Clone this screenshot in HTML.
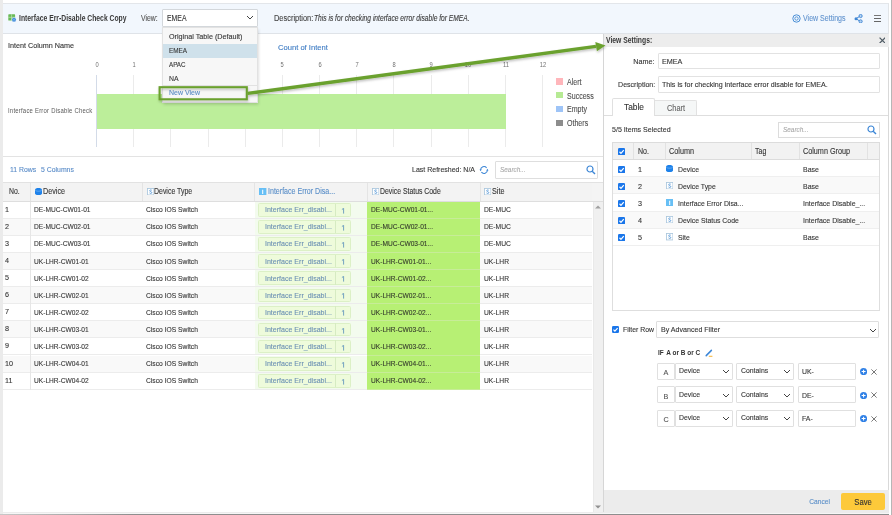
<!DOCTYPE html>
<html><head><meta charset="utf-8"><title>View Settings</title>
<style>
html,body{margin:0;padding:0;}
body{width:892px;height:515px;position:relative;overflow:hidden;background:#fff;font-family:"Liberation Sans", sans-serif;}
.r{position:absolute;}
.t{position:absolute;white-space:nowrap;-webkit-text-stroke:0.12px currentColor;}
</style></head><body>
<div class="r" style="left:0.00px;top:0.00px;width:3.00px;height:515.00px;background:#ebebeb"></div>
<div class="r" style="left:3.00px;top:3.00px;width:886.00px;height:30.50px;background:#f2f7fd;border-top:1px solid #e3e6ea;border-bottom:1px solid #dfe3e8;border-right:1px solid #e2e5e8;box-sizing:border-box"></div>
<svg class="r" style="left:7.8px;top:14px" width="10" height="9" viewBox="0 0 10 9"><rect x="0.3" y="0.3" width="6.8" height="6.2" rx="0.6" fill="#68b954"/><path d="M0.3 3.3H7.1M3.6 0.3V6.5" stroke="#cfeac6" stroke-width="0.6"/><circle cx="6.0" cy="5.7" r="2.2" fill="#2f83da" stroke="#f2f7fd" stroke-width="0.5"/><path d="M6.0 4.9v1.7" stroke="#fff" stroke-width="0.6"/></svg>
<div class="t" style="left:18.90px;top:13.25px;font-size:8.6px;line-height:10.75px;color:#3a3a3a;font-weight:bold;font-style:normal;transform:scaleX(0.79);transform-origin:0 0;-webkit-text-stroke:0;">Interface Err-Disable Check Copy</div>
<div class="t" style="left:141.00px;top:13.35px;font-size:8.6px;line-height:10.75px;color:#555;font-weight:normal;font-style:normal;transform:scaleX(0.8);transform-origin:0 0;">View:</div>
<div class="r" style="left:161.80px;top:9.30px;width:95.80px;height:17.80px;background:#fff;border:1px solid #d3d7db;border-radius:1px;box-sizing:border-box"></div>
<div class="t" style="left:166.80px;top:13.15px;font-size:8.6px;line-height:10.75px;color:#363636;font-weight:normal;font-style:normal;transform:scaleX(0.8);transform-origin:0 0;">EMEA</div>
<svg class="r" style="left:246px;top:15px" width="8" height="5" viewBox="0 0 8 5"><path d="M1 1l3 3 3-3" fill="none" stroke="#444" stroke-width="1"/></svg>
<div class="t" style="left:273.90px;top:13.44px;font-size:8.5px;line-height:10.625px;color:#444;font-weight:normal;font-style:normal;transform:scaleX(0.875);transform-origin:0 0;">Description:</div>
<div class="t" style="left:313.90px;top:13.44px;font-size:8.5px;line-height:10.625px;color:#3a3a3a;font-weight:normal;font-style:italic;transform:scaleX(0.784);transform-origin:0 0;">This is for checking interface error disable for EMEA.</div>
<svg class="r" style="left:791.5px;top:14.3px" width="9" height="9" viewBox="0 0 9 9"><circle cx="4.5" cy="4.5" r="3.7" fill="none" stroke="#4a8fd6" stroke-width="1"/><circle cx="4.5" cy="4.5" r="1.7" fill="none" stroke="#4a8fd6" stroke-width="0.9"/></svg>
<div class="t" style="left:803.30px;top:13.44px;font-size:8.4px;line-height:10.5px;color:#6495cf;font-weight:normal;font-style:normal;transform:scaleX(0.84);transform-origin:0 0;">View Settings</div>
<svg class="r" style="left:854px;top:13.8px" width="9" height="9.5" viewBox="0 0 9 9.5"><path d="M2 4.7L6.3 2M2 4.7L6.3 7.4" stroke="#3f86d4" stroke-width="1"/><circle cx="2" cy="4.7" r="1.5" fill="#3f86d4"/><circle cx="6.6" cy="2" r="1.6" fill="#b5d3f2" stroke="#3f86d4" stroke-width="0.9"/><circle cx="6.6" cy="7.4" r="1.6" fill="#b5d3f2" stroke="#3f86d4" stroke-width="0.9"/></svg>
<div class="r" style="left:874.00px;top:14.90px;width:7.20px;height:1.00px;background:#777"></div>
<div class="r" style="left:874.00px;top:17.70px;width:7.20px;height:1.00px;background:#666"></div>
<div class="r" style="left:874.00px;top:20.50px;width:7.20px;height:1.00px;background:#666"></div>
<div class="t" style="left:7.80px;top:41.03px;font-size:8px;line-height:10.0px;color:#363636;font-weight:normal;font-style:normal;transform:scaleX(0.9);transform-origin:0 0;">Intent Column Name</div>
<div class="t" style="left:277.60px;top:42.73px;font-size:8px;line-height:10.0px;color:#3f7cc4;font-weight:normal;font-style:normal;transform:scaleX(0.95);transform-origin:0 0;">Count of Intent</div>
<div class="r" style="left:96.00px;top:74.80px;width:1.00px;height:72.40px;background:#d3dbe8"></div>
<div class="t" style="left:46.50px;width:100px;text-align:center;top:61.00px;font-size:7px;line-height:8.75px;color:#707070;font-weight:normal;font-style:normal;transform:scaleX(0.82);transform-origin:50% 0;-webkit-text-stroke:0;">0</div>
<div class="r" style="left:133.18px;top:74.80px;width:1.00px;height:72.40px;background:#ebebeb"></div>
<div class="t" style="left:83.68px;width:100px;text-align:center;top:61.00px;font-size:7px;line-height:8.75px;color:#707070;font-weight:normal;font-style:normal;transform:scaleX(0.82);transform-origin:50% 0;-webkit-text-stroke:0;">1</div>
<div class="r" style="left:170.36px;top:74.80px;width:1.00px;height:72.40px;background:#ebebeb"></div>
<div class="t" style="left:120.86px;width:100px;text-align:center;top:61.00px;font-size:7px;line-height:8.75px;color:#707070;font-weight:normal;font-style:normal;transform:scaleX(0.82);transform-origin:50% 0;-webkit-text-stroke:0;">2</div>
<div class="r" style="left:207.55px;top:74.80px;width:1.00px;height:72.40px;background:#ebebeb"></div>
<div class="t" style="left:158.05px;width:100px;text-align:center;top:61.00px;font-size:7px;line-height:8.75px;color:#707070;font-weight:normal;font-style:normal;transform:scaleX(0.82);transform-origin:50% 0;-webkit-text-stroke:0;">3</div>
<div class="r" style="left:244.73px;top:74.80px;width:1.00px;height:72.40px;background:#ebebeb"></div>
<div class="t" style="left:195.23px;width:100px;text-align:center;top:61.00px;font-size:7px;line-height:8.75px;color:#707070;font-weight:normal;font-style:normal;transform:scaleX(0.82);transform-origin:50% 0;-webkit-text-stroke:0;">4</div>
<div class="r" style="left:281.91px;top:74.80px;width:1.00px;height:72.40px;background:#ebebeb"></div>
<div class="t" style="left:232.41px;width:100px;text-align:center;top:61.00px;font-size:7px;line-height:8.75px;color:#707070;font-weight:normal;font-style:normal;transform:scaleX(0.82);transform-origin:50% 0;-webkit-text-stroke:0;">5</div>
<div class="r" style="left:319.09px;top:74.80px;width:1.00px;height:72.40px;background:#ebebeb"></div>
<div class="t" style="left:269.59px;width:100px;text-align:center;top:61.00px;font-size:7px;line-height:8.75px;color:#707070;font-weight:normal;font-style:normal;transform:scaleX(0.82);transform-origin:50% 0;-webkit-text-stroke:0;">6</div>
<div class="r" style="left:356.27px;top:74.80px;width:1.00px;height:72.40px;background:#ebebeb"></div>
<div class="t" style="left:306.77px;width:100px;text-align:center;top:61.00px;font-size:7px;line-height:8.75px;color:#707070;font-weight:normal;font-style:normal;transform:scaleX(0.82);transform-origin:50% 0;-webkit-text-stroke:0;">7</div>
<div class="r" style="left:393.45px;top:74.80px;width:1.00px;height:72.40px;background:#ebebeb"></div>
<div class="t" style="left:343.95px;width:100px;text-align:center;top:61.00px;font-size:7px;line-height:8.75px;color:#707070;font-weight:normal;font-style:normal;transform:scaleX(0.82);transform-origin:50% 0;-webkit-text-stroke:0;">8</div>
<div class="r" style="left:430.64px;top:74.80px;width:1.00px;height:72.40px;background:#ebebeb"></div>
<div class="t" style="left:381.14px;width:100px;text-align:center;top:61.00px;font-size:7px;line-height:8.75px;color:#707070;font-weight:normal;font-style:normal;transform:scaleX(0.82);transform-origin:50% 0;-webkit-text-stroke:0;">9</div>
<div class="r" style="left:467.82px;top:74.80px;width:1.00px;height:72.40px;background:#ebebeb"></div>
<div class="t" style="left:418.32px;width:100px;text-align:center;top:61.00px;font-size:7px;line-height:8.75px;color:#707070;font-weight:normal;font-style:normal;transform:scaleX(0.82);transform-origin:50% 0;-webkit-text-stroke:0;">10</div>
<div class="r" style="left:505.00px;top:74.80px;width:1.00px;height:72.40px;background:#ebebeb"></div>
<div class="t" style="left:455.50px;width:100px;text-align:center;top:61.00px;font-size:7px;line-height:8.75px;color:#707070;font-weight:normal;font-style:normal;transform:scaleX(0.82);transform-origin:50% 0;-webkit-text-stroke:0;">11</div>
<div class="r" style="left:542.18px;top:74.80px;width:1.00px;height:72.40px;background:#ebebeb"></div>
<div class="t" style="left:492.68px;width:100px;text-align:center;top:61.00px;font-size:7px;line-height:8.75px;color:#707070;font-weight:normal;font-style:normal;transform:scaleX(0.82);transform-origin:50% 0;-webkit-text-stroke:0;">12</div>
<div class="r" style="left:96.50px;top:94.20px;width:409.00px;height:34.40px;background:#bcee9a"></div>
<div class="t" style="left:7.60px;top:107.09px;font-size:6.6px;line-height:8.25px;color:#5a5a5a;font-weight:normal;font-style:normal;transform:scaleX(0.9);transform-origin:0 0;letter-spacing:0.25px;-webkit-text-stroke:0;">Interface Error Disable Check</div>
<div class="r" style="left:556.00px;top:77.80px;width:7.00px;height:6.80px;background:#ffb6bb"></div>
<div class="t" style="left:566.90px;top:76.64px;font-size:8.3px;line-height:10.375px;color:#505050;font-weight:normal;font-style:normal;transform:scaleX(0.85);transform-origin:0 0;">Alert</div>
<div class="r" style="left:556.00px;top:91.70px;width:7.00px;height:6.80px;background:#b6ea94"></div>
<div class="t" style="left:566.90px;top:90.54px;font-size:8.3px;line-height:10.375px;color:#505050;font-weight:normal;font-style:normal;transform:scaleX(0.85);transform-origin:0 0;">Success</div>
<div class="r" style="left:556.00px;top:105.60px;width:7.00px;height:6.80px;background:#9ec4f7"></div>
<div class="t" style="left:566.90px;top:104.44px;font-size:8.3px;line-height:10.375px;color:#505050;font-weight:normal;font-style:normal;transform:scaleX(0.85);transform-origin:0 0;">Empty</div>
<div class="r" style="left:556.00px;top:119.50px;width:7.00px;height:6.80px;background:#8d8d8d"></div>
<div class="t" style="left:566.90px;top:118.34px;font-size:8.3px;line-height:10.375px;color:#505050;font-weight:normal;font-style:normal;transform:scaleX(0.85);transform-origin:0 0;">Others</div>
<div class="r" style="left:3.00px;top:156.00px;width:600.50px;height:1.00px;background:#e3e3e3"></div>
<div class="t" style="left:9.70px;top:164.93px;font-size:8px;line-height:10.0px;color:#5a8cc8;font-weight:normal;font-style:normal;transform:scaleX(0.86);transform-origin:0 0;">11 Rows</div>
<div class="t" style="left:40.60px;top:164.93px;font-size:8px;line-height:10.0px;color:#5a8cc8;font-weight:normal;font-style:normal;transform:scaleX(0.86);transform-origin:0 0;">5 Columns</div>
<div class="t" style="right:417.10px;top:165.23px;font-size:8px;line-height:10.0px;color:#363636;font-weight:normal;font-style:normal;transform:scaleX(0.875);transform-origin:100% 0;">Last Refreshed: N/A</div>
<svg class="r" style="left:479px;top:165.2px" width="10" height="10" viewBox="0 0 10 10"><path d="M7.6 2.8A3.4 3.4 0 0 0 1.6 5M2.4 7.2A3.4 3.4 0 0 0 8.4 5" fill="none" stroke="#3c86d6" stroke-width="1.1"/><path d="M0.5 4.4H2.7L1.6 6.2z M7.3 5.6H9.5L8.4 3.8z" fill="#3c86d6"/></svg>
<div class="r" style="left:495.30px;top:161.00px;width:103.10px;height:18.00px;background:#fff;border:1px solid #dedede;box-sizing:border-box;border-radius:1px"></div>
<div class="t" style="left:500.00px;top:164.53px;font-size:8px;line-height:10.0px;color:#aaa;font-weight:normal;font-style:italic;transform:scaleX(0.8);transform-origin:0 0;">Search...</div>
<svg class="r" style="left:585.5px;top:164.5px" width="10" height="10" viewBox="0 0 10 10"><circle cx="4" cy="4" r="3" fill="none" stroke="#3c86d6" stroke-width="1.2"/><path d="M6.2 6.2L9 9" stroke="#3c86d6" stroke-width="1.4"/></svg>
<div class="r" style="left:3.00px;top:181.50px;width:589.00px;height:20.00px;background:#f3f3f3;border-top:1px solid #e2e2e2;border-bottom:1px solid #dedede;box-sizing:border-box"></div>
<div class="r" style="left:592.00px;top:181.50px;width:11.50px;height:20.00px;background:#f4f4f4;border-top:1px solid #e2e2e2;border-bottom:1px solid #dedede;box-sizing:border-box"></div>
<div class="r" style="left:30.00px;top:182.50px;width:1.00px;height:18.00px;background:#e4e4e4"></div>
<div class="r" style="left:141.70px;top:182.50px;width:1.00px;height:18.00px;background:#e4e4e4"></div>
<div class="r" style="left:254.10px;top:182.50px;width:1.00px;height:18.00px;background:#e4e4e4"></div>
<div class="r" style="left:367.00px;top:182.50px;width:1.00px;height:18.00px;background:#e4e4e4"></div>
<div class="r" style="left:479.50px;top:182.50px;width:1.00px;height:18.00px;background:#e4e4e4"></div>
<div class="t" style="left:8.70px;top:186.45px;font-size:8.7px;line-height:10.875px;color:#363636;font-weight:normal;font-style:normal;transform:scaleX(0.791);transform-origin:0 0;">No.</div>
<svg class="r" style="left:34.9px;top:188.1px" width="7" height="7.2" viewBox="0 0 7 7.2"><path d="M0 1.6C0 0.7 1.6 0 3.5 0S7 0.7 7 1.6V5.6C7 6.5 5.4 7.2 3.5 7.2S0 6.5 0 5.6Z" fill="#1e82ea"/><path d="M0.3 2.2C0.8 2.9 2 3.2 3.5 3.2S6.2 2.9 6.7 2.2" fill="none" stroke="#8fc3f5" stroke-width="0.6"/></svg>
<div class="t" style="left:43.00px;top:186.45px;font-size:8.7px;line-height:10.875px;color:#363636;font-weight:normal;font-style:normal;transform:scaleX(0.828);transform-origin:0 0;">Device</div>
<svg class="r" style="left:146.5px;top:188px" width="7.4" height="7.4" viewBox="0 0 8 8"><rect x="0.5" y="0.5" width="7" height="7" fill="#fff" stroke="#a9c6dd" stroke-width="0.9"/><path d="M5.2 2.6Q4.8 2.1 4 2.1Q2.9 2.1 2.9 3Q2.9 3.7 4 3.95Q5.2 4.2 5.2 5Q5.2 5.9 4 5.9Q3.1 5.9 2.7 5.3" fill="none" stroke="#4a8fd2" stroke-width="0.85"/></svg>
<div class="t" style="left:154.20px;top:186.45px;font-size:8.7px;line-height:10.875px;color:#363636;font-weight:normal;font-style:normal;transform:scaleX(0.8);transform-origin:0 0;">Device Type</div>
<svg class="r" style="left:259.2px;top:188px" width="7.4" height="7.4" viewBox="0 0 8 8"><rect x="0" y="0" width="8" height="8" fill="#67bff5"/><path d="M4 1.8v4.6" stroke="#fff" stroke-width="1.1"/></svg>
<div class="t" style="left:267.50px;top:186.45px;font-size:8.7px;line-height:10.875px;color:#5b8fc8;font-weight:normal;font-style:normal;transform:scaleX(0.813);transform-origin:0 0;">Interface Error Disa...</div>
<svg class="r" style="left:372px;top:188px" width="7.4" height="7.4" viewBox="0 0 8 8"><rect x="0.5" y="0.5" width="7" height="7" fill="#fff" stroke="#a9c6dd" stroke-width="0.9"/><path d="M5.2 2.6Q4.8 2.1 4 2.1Q2.9 2.1 2.9 3Q2.9 3.7 4 3.95Q5.2 4.2 5.2 5Q5.2 5.9 4 5.9Q3.1 5.9 2.7 5.3" fill="none" stroke="#4a8fd2" stroke-width="0.85"/></svg>
<div class="t" style="left:380.30px;top:186.45px;font-size:8.7px;line-height:10.875px;color:#363636;font-weight:normal;font-style:normal;transform:scaleX(0.791);transform-origin:0 0;">Device Status Code</div>
<svg class="r" style="left:484px;top:188px" width="7.4" height="7.4" viewBox="0 0 8 8"><rect x="0.5" y="0.5" width="7" height="7" fill="#fff" stroke="#a9c6dd" stroke-width="0.9"/><path d="M5.2 2.6Q4.8 2.1 4 2.1Q2.9 2.1 2.9 3Q2.9 3.7 4 3.95Q5.2 4.2 5.2 5Q5.2 5.9 4 5.9Q3.1 5.9 2.7 5.3" fill="none" stroke="#4a8fd2" stroke-width="0.85"/></svg>
<div class="t" style="left:492.30px;top:186.45px;font-size:8.7px;line-height:10.875px;color:#363636;font-weight:normal;font-style:normal;transform:scaleX(0.828);transform-origin:0 0;">Site</div>
<div class="r" style="left:3.00px;top:201.60px;width:589.00px;height:17.10px;background:#ffffff;border-bottom:1px solid #ececec;box-sizing:border-box"></div>
<div class="r" style="left:254.60px;top:201.60px;width:112.70px;height:16.10px;background:#f3fbee"></div>
<div class="r" style="left:367.20px;top:201.60px;width:112.80px;height:17.10px;background:#b7f074"></div>
<div class="r" style="left:367.20px;top:217.80px;width:112.80px;height:1.00px;background:#c7ec98"></div>
<div class="t" style="left:5.40px;top:204.63px;font-size:8px;line-height:10.0px;color:#363636;font-weight:normal;font-style:normal;transform:scaleX(0.9);transform-origin:0 0;">1</div>
<div class="t" style="left:34.20px;top:205.23px;font-size:8px;line-height:10.0px;color:#363636;font-weight:normal;font-style:normal;transform:scaleX(0.826);transform-origin:0 0;">DE-MUC-CW01-01</div>
<div class="t" style="left:145.80px;top:205.23px;font-size:8px;line-height:10.0px;color:#363636;font-weight:normal;font-style:normal;transform:scaleX(0.84);transform-origin:0 0;">Cisco IOS Switch</div>
<div class="r" style="left:258.10px;top:203.00px;width:92.70px;height:13.70px;background:#eefbdb;border:1px solid #dcf0c6;border-radius:1.5px;box-sizing:border-box"></div>
<div class="r" style="left:335.00px;top:203.50px;width:0.90px;height:12.70px;background:#d6ebc2"></div>
<div class="t" style="left:264.70px;top:205.23px;font-size:8px;line-height:10.0px;color:#6d92b4;font-weight:normal;font-style:normal;transform:scaleX(0.88);transform-origin:0 0;">Interface Err_disabl...</div>
<svg class="r" style="left:341px;top:207.80px" width="4" height="6" viewBox="0 0 4 6"><path d="M2.6 0.3V5.6M0.9 1.5L2.6 0.3" fill="none" stroke="#6d9dbf" stroke-width="0.95"/></svg>
<div class="t" style="left:371.00px;top:205.23px;font-size:8px;line-height:10.0px;color:#343a2c;font-weight:normal;font-style:normal;transform:scaleX(0.826);transform-origin:0 0;">DE-MUC-CW01-01...</div>
<div class="t" style="left:484.00px;top:205.23px;font-size:8px;line-height:10.0px;color:#363636;font-weight:normal;font-style:normal;transform:scaleX(0.84);transform-origin:0 0;">DE-MUC</div>
<div class="r" style="left:3.00px;top:218.70px;width:589.00px;height:17.10px;background:#f9f9f9;border-bottom:1px solid #ececec;box-sizing:border-box"></div>
<div class="r" style="left:254.60px;top:218.70px;width:112.70px;height:16.10px;background:#f3fbee"></div>
<div class="r" style="left:367.20px;top:218.70px;width:112.80px;height:17.10px;background:#b7f074"></div>
<div class="r" style="left:367.20px;top:234.90px;width:112.80px;height:1.00px;background:#c7ec98"></div>
<div class="t" style="left:5.40px;top:221.73px;font-size:8px;line-height:10.0px;color:#363636;font-weight:normal;font-style:normal;transform:scaleX(0.9);transform-origin:0 0;">2</div>
<div class="t" style="left:34.20px;top:222.33px;font-size:8px;line-height:10.0px;color:#363636;font-weight:normal;font-style:normal;transform:scaleX(0.826);transform-origin:0 0;">DE-MUC-CW02-01</div>
<div class="t" style="left:145.80px;top:222.33px;font-size:8px;line-height:10.0px;color:#363636;font-weight:normal;font-style:normal;transform:scaleX(0.84);transform-origin:0 0;">Cisco IOS Switch</div>
<div class="r" style="left:258.10px;top:220.10px;width:92.70px;height:13.70px;background:#eefbdb;border:1px solid #dcf0c6;border-radius:1.5px;box-sizing:border-box"></div>
<div class="r" style="left:335.00px;top:220.60px;width:0.90px;height:12.70px;background:#d6ebc2"></div>
<div class="t" style="left:264.70px;top:222.33px;font-size:8px;line-height:10.0px;color:#6d92b4;font-weight:normal;font-style:normal;transform:scaleX(0.88);transform-origin:0 0;">Interface Err_disabl...</div>
<svg class="r" style="left:341px;top:224.90px" width="4" height="6" viewBox="0 0 4 6"><path d="M2.6 0.3V5.6M0.9 1.5L2.6 0.3" fill="none" stroke="#6d9dbf" stroke-width="0.95"/></svg>
<div class="t" style="left:371.00px;top:222.33px;font-size:8px;line-height:10.0px;color:#343a2c;font-weight:normal;font-style:normal;transform:scaleX(0.826);transform-origin:0 0;">DE-MUC-CW02-01...</div>
<div class="t" style="left:484.00px;top:222.33px;font-size:8px;line-height:10.0px;color:#363636;font-weight:normal;font-style:normal;transform:scaleX(0.84);transform-origin:0 0;">DE-MUC</div>
<div class="r" style="left:3.00px;top:235.80px;width:589.00px;height:17.10px;background:#ffffff;border-bottom:1px solid #ececec;box-sizing:border-box"></div>
<div class="r" style="left:254.60px;top:235.80px;width:112.70px;height:16.10px;background:#f3fbee"></div>
<div class="r" style="left:367.20px;top:235.80px;width:112.80px;height:17.10px;background:#b7f074"></div>
<div class="r" style="left:367.20px;top:252.00px;width:112.80px;height:1.00px;background:#c7ec98"></div>
<div class="t" style="left:5.40px;top:238.83px;font-size:8px;line-height:10.0px;color:#363636;font-weight:normal;font-style:normal;transform:scaleX(0.9);transform-origin:0 0;">3</div>
<div class="t" style="left:34.20px;top:239.43px;font-size:8px;line-height:10.0px;color:#363636;font-weight:normal;font-style:normal;transform:scaleX(0.826);transform-origin:0 0;">DE-MUC-CW03-01</div>
<div class="t" style="left:145.80px;top:239.43px;font-size:8px;line-height:10.0px;color:#363636;font-weight:normal;font-style:normal;transform:scaleX(0.84);transform-origin:0 0;">Cisco IOS Switch</div>
<div class="r" style="left:258.10px;top:237.20px;width:92.70px;height:13.70px;background:#eefbdb;border:1px solid #dcf0c6;border-radius:1.5px;box-sizing:border-box"></div>
<div class="r" style="left:335.00px;top:237.70px;width:0.90px;height:12.70px;background:#d6ebc2"></div>
<div class="t" style="left:264.70px;top:239.43px;font-size:8px;line-height:10.0px;color:#6d92b4;font-weight:normal;font-style:normal;transform:scaleX(0.88);transform-origin:0 0;">Interface Err_disabl...</div>
<svg class="r" style="left:341px;top:242.00px" width="4" height="6" viewBox="0 0 4 6"><path d="M2.6 0.3V5.6M0.9 1.5L2.6 0.3" fill="none" stroke="#6d9dbf" stroke-width="0.95"/></svg>
<div class="t" style="left:371.00px;top:239.43px;font-size:8px;line-height:10.0px;color:#343a2c;font-weight:normal;font-style:normal;transform:scaleX(0.826);transform-origin:0 0;">DE-MUC-CW03-01...</div>
<div class="t" style="left:484.00px;top:239.43px;font-size:8px;line-height:10.0px;color:#363636;font-weight:normal;font-style:normal;transform:scaleX(0.84);transform-origin:0 0;">DE-MUC</div>
<div class="r" style="left:3.00px;top:252.90px;width:589.00px;height:17.10px;background:#f9f9f9;border-bottom:1px solid #ececec;box-sizing:border-box"></div>
<div class="r" style="left:254.60px;top:252.90px;width:112.70px;height:16.10px;background:#f3fbee"></div>
<div class="r" style="left:367.20px;top:252.90px;width:112.80px;height:17.10px;background:#b7f074"></div>
<div class="r" style="left:367.20px;top:269.10px;width:112.80px;height:1.00px;background:#c7ec98"></div>
<div class="t" style="left:5.40px;top:255.93px;font-size:8px;line-height:10.0px;color:#363636;font-weight:normal;font-style:normal;transform:scaleX(0.9);transform-origin:0 0;">4</div>
<div class="t" style="left:34.20px;top:256.53px;font-size:8px;line-height:10.0px;color:#363636;font-weight:normal;font-style:normal;transform:scaleX(0.826);transform-origin:0 0;">UK-LHR-CW01-01</div>
<div class="t" style="left:145.80px;top:256.53px;font-size:8px;line-height:10.0px;color:#363636;font-weight:normal;font-style:normal;transform:scaleX(0.84);transform-origin:0 0;">Cisco IOS Switch</div>
<div class="r" style="left:258.10px;top:254.30px;width:92.70px;height:13.70px;background:#eefbdb;border:1px solid #dcf0c6;border-radius:1.5px;box-sizing:border-box"></div>
<div class="r" style="left:335.00px;top:254.80px;width:0.90px;height:12.70px;background:#d6ebc2"></div>
<div class="t" style="left:264.70px;top:256.53px;font-size:8px;line-height:10.0px;color:#6d92b4;font-weight:normal;font-style:normal;transform:scaleX(0.88);transform-origin:0 0;">Interface Err_disabl...</div>
<svg class="r" style="left:341px;top:259.10px" width="4" height="6" viewBox="0 0 4 6"><path d="M2.6 0.3V5.6M0.9 1.5L2.6 0.3" fill="none" stroke="#6d9dbf" stroke-width="0.95"/></svg>
<div class="t" style="left:371.00px;top:256.53px;font-size:8px;line-height:10.0px;color:#343a2c;font-weight:normal;font-style:normal;transform:scaleX(0.826);transform-origin:0 0;">UK-LHR-CW01-01...</div>
<div class="t" style="left:484.00px;top:256.53px;font-size:8px;line-height:10.0px;color:#363636;font-weight:normal;font-style:normal;transform:scaleX(0.84);transform-origin:0 0;">UK-LHR</div>
<div class="r" style="left:3.00px;top:270.00px;width:589.00px;height:17.10px;background:#ffffff;border-bottom:1px solid #ececec;box-sizing:border-box"></div>
<div class="r" style="left:254.60px;top:270.00px;width:112.70px;height:16.10px;background:#f3fbee"></div>
<div class="r" style="left:367.20px;top:270.00px;width:112.80px;height:17.10px;background:#b7f074"></div>
<div class="r" style="left:367.20px;top:286.20px;width:112.80px;height:1.00px;background:#c7ec98"></div>
<div class="t" style="left:5.40px;top:273.03px;font-size:8px;line-height:10.0px;color:#363636;font-weight:normal;font-style:normal;transform:scaleX(0.9);transform-origin:0 0;">5</div>
<div class="t" style="left:34.20px;top:273.63px;font-size:8px;line-height:10.0px;color:#363636;font-weight:normal;font-style:normal;transform:scaleX(0.826);transform-origin:0 0;">UK-LHR-CW01-02</div>
<div class="t" style="left:145.80px;top:273.63px;font-size:8px;line-height:10.0px;color:#363636;font-weight:normal;font-style:normal;transform:scaleX(0.84);transform-origin:0 0;">Cisco IOS Switch</div>
<div class="r" style="left:258.10px;top:271.40px;width:92.70px;height:13.70px;background:#eefbdb;border:1px solid #dcf0c6;border-radius:1.5px;box-sizing:border-box"></div>
<div class="r" style="left:335.00px;top:271.90px;width:0.90px;height:12.70px;background:#d6ebc2"></div>
<div class="t" style="left:264.70px;top:273.63px;font-size:8px;line-height:10.0px;color:#6d92b4;font-weight:normal;font-style:normal;transform:scaleX(0.88);transform-origin:0 0;">Interface Err_disabl...</div>
<svg class="r" style="left:341px;top:276.20px" width="4" height="6" viewBox="0 0 4 6"><path d="M2.6 0.3V5.6M0.9 1.5L2.6 0.3" fill="none" stroke="#6d9dbf" stroke-width="0.95"/></svg>
<div class="t" style="left:371.00px;top:273.63px;font-size:8px;line-height:10.0px;color:#343a2c;font-weight:normal;font-style:normal;transform:scaleX(0.826);transform-origin:0 0;">UK-LHR-CW01-02...</div>
<div class="t" style="left:484.00px;top:273.63px;font-size:8px;line-height:10.0px;color:#363636;font-weight:normal;font-style:normal;transform:scaleX(0.84);transform-origin:0 0;">UK-LHR</div>
<div class="r" style="left:3.00px;top:287.10px;width:589.00px;height:17.10px;background:#f9f9f9;border-bottom:1px solid #ececec;box-sizing:border-box"></div>
<div class="r" style="left:254.60px;top:287.10px;width:112.70px;height:16.10px;background:#f3fbee"></div>
<div class="r" style="left:367.20px;top:287.10px;width:112.80px;height:17.10px;background:#b7f074"></div>
<div class="r" style="left:367.20px;top:303.30px;width:112.80px;height:1.00px;background:#c7ec98"></div>
<div class="t" style="left:5.40px;top:290.13px;font-size:8px;line-height:10.0px;color:#363636;font-weight:normal;font-style:normal;transform:scaleX(0.9);transform-origin:0 0;">6</div>
<div class="t" style="left:34.20px;top:290.73px;font-size:8px;line-height:10.0px;color:#363636;font-weight:normal;font-style:normal;transform:scaleX(0.826);transform-origin:0 0;">UK-LHR-CW02-01</div>
<div class="t" style="left:145.80px;top:290.73px;font-size:8px;line-height:10.0px;color:#363636;font-weight:normal;font-style:normal;transform:scaleX(0.84);transform-origin:0 0;">Cisco IOS Switch</div>
<div class="r" style="left:258.10px;top:288.50px;width:92.70px;height:13.70px;background:#eefbdb;border:1px solid #dcf0c6;border-radius:1.5px;box-sizing:border-box"></div>
<div class="r" style="left:335.00px;top:289.00px;width:0.90px;height:12.70px;background:#d6ebc2"></div>
<div class="t" style="left:264.70px;top:290.73px;font-size:8px;line-height:10.0px;color:#6d92b4;font-weight:normal;font-style:normal;transform:scaleX(0.88);transform-origin:0 0;">Interface Err_disabl...</div>
<svg class="r" style="left:341px;top:293.30px" width="4" height="6" viewBox="0 0 4 6"><path d="M2.6 0.3V5.6M0.9 1.5L2.6 0.3" fill="none" stroke="#6d9dbf" stroke-width="0.95"/></svg>
<div class="t" style="left:371.00px;top:290.73px;font-size:8px;line-height:10.0px;color:#343a2c;font-weight:normal;font-style:normal;transform:scaleX(0.826);transform-origin:0 0;">UK-LHR-CW02-01...</div>
<div class="t" style="left:484.00px;top:290.73px;font-size:8px;line-height:10.0px;color:#363636;font-weight:normal;font-style:normal;transform:scaleX(0.84);transform-origin:0 0;">UK-LHR</div>
<div class="r" style="left:3.00px;top:304.20px;width:589.00px;height:17.10px;background:#ffffff;border-bottom:1px solid #ececec;box-sizing:border-box"></div>
<div class="r" style="left:254.60px;top:304.20px;width:112.70px;height:16.10px;background:#f3fbee"></div>
<div class="r" style="left:367.20px;top:304.20px;width:112.80px;height:17.10px;background:#b7f074"></div>
<div class="r" style="left:367.20px;top:320.40px;width:112.80px;height:1.00px;background:#c7ec98"></div>
<div class="t" style="left:5.40px;top:307.23px;font-size:8px;line-height:10.0px;color:#363636;font-weight:normal;font-style:normal;transform:scaleX(0.9);transform-origin:0 0;">7</div>
<div class="t" style="left:34.20px;top:307.83px;font-size:8px;line-height:10.0px;color:#363636;font-weight:normal;font-style:normal;transform:scaleX(0.826);transform-origin:0 0;">UK-LHR-CW02-02</div>
<div class="t" style="left:145.80px;top:307.83px;font-size:8px;line-height:10.0px;color:#363636;font-weight:normal;font-style:normal;transform:scaleX(0.84);transform-origin:0 0;">Cisco IOS Switch</div>
<div class="r" style="left:258.10px;top:305.60px;width:92.70px;height:13.70px;background:#eefbdb;border:1px solid #dcf0c6;border-radius:1.5px;box-sizing:border-box"></div>
<div class="r" style="left:335.00px;top:306.10px;width:0.90px;height:12.70px;background:#d6ebc2"></div>
<div class="t" style="left:264.70px;top:307.83px;font-size:8px;line-height:10.0px;color:#6d92b4;font-weight:normal;font-style:normal;transform:scaleX(0.88);transform-origin:0 0;">Interface Err_disabl...</div>
<svg class="r" style="left:341px;top:310.40px" width="4" height="6" viewBox="0 0 4 6"><path d="M2.6 0.3V5.6M0.9 1.5L2.6 0.3" fill="none" stroke="#6d9dbf" stroke-width="0.95"/></svg>
<div class="t" style="left:371.00px;top:307.83px;font-size:8px;line-height:10.0px;color:#343a2c;font-weight:normal;font-style:normal;transform:scaleX(0.826);transform-origin:0 0;">UK-LHR-CW02-02...</div>
<div class="t" style="left:484.00px;top:307.83px;font-size:8px;line-height:10.0px;color:#363636;font-weight:normal;font-style:normal;transform:scaleX(0.84);transform-origin:0 0;">UK-LHR</div>
<div class="r" style="left:3.00px;top:321.30px;width:589.00px;height:17.10px;background:#f9f9f9;border-bottom:1px solid #ececec;box-sizing:border-box"></div>
<div class="r" style="left:254.60px;top:321.30px;width:112.70px;height:16.10px;background:#f3fbee"></div>
<div class="r" style="left:367.20px;top:321.30px;width:112.80px;height:17.10px;background:#b7f074"></div>
<div class="r" style="left:367.20px;top:337.50px;width:112.80px;height:1.00px;background:#c7ec98"></div>
<div class="t" style="left:5.40px;top:324.33px;font-size:8px;line-height:10.0px;color:#363636;font-weight:normal;font-style:normal;transform:scaleX(0.9);transform-origin:0 0;">8</div>
<div class="t" style="left:34.20px;top:324.93px;font-size:8px;line-height:10.0px;color:#363636;font-weight:normal;font-style:normal;transform:scaleX(0.826);transform-origin:0 0;">UK-LHR-CW03-01</div>
<div class="t" style="left:145.80px;top:324.93px;font-size:8px;line-height:10.0px;color:#363636;font-weight:normal;font-style:normal;transform:scaleX(0.84);transform-origin:0 0;">Cisco IOS Switch</div>
<div class="r" style="left:258.10px;top:322.70px;width:92.70px;height:13.70px;background:#eefbdb;border:1px solid #dcf0c6;border-radius:1.5px;box-sizing:border-box"></div>
<div class="r" style="left:335.00px;top:323.20px;width:0.90px;height:12.70px;background:#d6ebc2"></div>
<div class="t" style="left:264.70px;top:324.93px;font-size:8px;line-height:10.0px;color:#6d92b4;font-weight:normal;font-style:normal;transform:scaleX(0.88);transform-origin:0 0;">Interface Err_disabl...</div>
<svg class="r" style="left:341px;top:327.50px" width="4" height="6" viewBox="0 0 4 6"><path d="M2.6 0.3V5.6M0.9 1.5L2.6 0.3" fill="none" stroke="#6d9dbf" stroke-width="0.95"/></svg>
<div class="t" style="left:371.00px;top:324.93px;font-size:8px;line-height:10.0px;color:#343a2c;font-weight:normal;font-style:normal;transform:scaleX(0.826);transform-origin:0 0;">UK-LHR-CW03-01...</div>
<div class="t" style="left:484.00px;top:324.93px;font-size:8px;line-height:10.0px;color:#363636;font-weight:normal;font-style:normal;transform:scaleX(0.84);transform-origin:0 0;">UK-LHR</div>
<div class="r" style="left:3.00px;top:338.40px;width:589.00px;height:17.10px;background:#ffffff;border-bottom:1px solid #ececec;box-sizing:border-box"></div>
<div class="r" style="left:254.60px;top:338.40px;width:112.70px;height:16.10px;background:#f3fbee"></div>
<div class="r" style="left:367.20px;top:338.40px;width:112.80px;height:17.10px;background:#b7f074"></div>
<div class="r" style="left:367.20px;top:354.60px;width:112.80px;height:1.00px;background:#c7ec98"></div>
<div class="t" style="left:5.40px;top:341.43px;font-size:8px;line-height:10.0px;color:#363636;font-weight:normal;font-style:normal;transform:scaleX(0.9);transform-origin:0 0;">9</div>
<div class="t" style="left:34.20px;top:342.03px;font-size:8px;line-height:10.0px;color:#363636;font-weight:normal;font-style:normal;transform:scaleX(0.826);transform-origin:0 0;">UK-LHR-CW03-02</div>
<div class="t" style="left:145.80px;top:342.03px;font-size:8px;line-height:10.0px;color:#363636;font-weight:normal;font-style:normal;transform:scaleX(0.84);transform-origin:0 0;">Cisco IOS Switch</div>
<div class="r" style="left:258.10px;top:339.80px;width:92.70px;height:13.70px;background:#eefbdb;border:1px solid #dcf0c6;border-radius:1.5px;box-sizing:border-box"></div>
<div class="r" style="left:335.00px;top:340.30px;width:0.90px;height:12.70px;background:#d6ebc2"></div>
<div class="t" style="left:264.70px;top:342.03px;font-size:8px;line-height:10.0px;color:#6d92b4;font-weight:normal;font-style:normal;transform:scaleX(0.88);transform-origin:0 0;">Interface Err_disabl...</div>
<svg class="r" style="left:341px;top:344.60px" width="4" height="6" viewBox="0 0 4 6"><path d="M2.6 0.3V5.6M0.9 1.5L2.6 0.3" fill="none" stroke="#6d9dbf" stroke-width="0.95"/></svg>
<div class="t" style="left:371.00px;top:342.03px;font-size:8px;line-height:10.0px;color:#343a2c;font-weight:normal;font-style:normal;transform:scaleX(0.826);transform-origin:0 0;">UK-LHR-CW03-02...</div>
<div class="t" style="left:484.00px;top:342.03px;font-size:8px;line-height:10.0px;color:#363636;font-weight:normal;font-style:normal;transform:scaleX(0.84);transform-origin:0 0;">UK-LHR</div>
<div class="r" style="left:3.00px;top:355.50px;width:589.00px;height:17.10px;background:#f9f9f9;border-bottom:1px solid #ececec;box-sizing:border-box"></div>
<div class="r" style="left:254.60px;top:355.50px;width:112.70px;height:16.10px;background:#f3fbee"></div>
<div class="r" style="left:367.20px;top:355.50px;width:112.80px;height:17.10px;background:#b7f074"></div>
<div class="r" style="left:367.20px;top:371.70px;width:112.80px;height:1.00px;background:#c7ec98"></div>
<div class="t" style="left:5.40px;top:358.53px;font-size:8px;line-height:10.0px;color:#363636;font-weight:normal;font-style:normal;transform:scaleX(0.9);transform-origin:0 0;">10</div>
<div class="t" style="left:34.20px;top:359.13px;font-size:8px;line-height:10.0px;color:#363636;font-weight:normal;font-style:normal;transform:scaleX(0.826);transform-origin:0 0;">UK-LHR-CW04-01</div>
<div class="t" style="left:145.80px;top:359.13px;font-size:8px;line-height:10.0px;color:#363636;font-weight:normal;font-style:normal;transform:scaleX(0.84);transform-origin:0 0;">Cisco IOS Switch</div>
<div class="r" style="left:258.10px;top:356.90px;width:92.70px;height:13.70px;background:#eefbdb;border:1px solid #dcf0c6;border-radius:1.5px;box-sizing:border-box"></div>
<div class="r" style="left:335.00px;top:357.40px;width:0.90px;height:12.70px;background:#d6ebc2"></div>
<div class="t" style="left:264.70px;top:359.13px;font-size:8px;line-height:10.0px;color:#6d92b4;font-weight:normal;font-style:normal;transform:scaleX(0.88);transform-origin:0 0;">Interface Err_disabl...</div>
<svg class="r" style="left:341px;top:361.70px" width="4" height="6" viewBox="0 0 4 6"><path d="M2.6 0.3V5.6M0.9 1.5L2.6 0.3" fill="none" stroke="#6d9dbf" stroke-width="0.95"/></svg>
<div class="t" style="left:371.00px;top:359.13px;font-size:8px;line-height:10.0px;color:#343a2c;font-weight:normal;font-style:normal;transform:scaleX(0.826);transform-origin:0 0;">UK-LHR-CW04-01...</div>
<div class="t" style="left:484.00px;top:359.13px;font-size:8px;line-height:10.0px;color:#363636;font-weight:normal;font-style:normal;transform:scaleX(0.84);transform-origin:0 0;">UK-LHR</div>
<div class="r" style="left:3.00px;top:372.60px;width:589.00px;height:17.10px;background:#ffffff;border-bottom:1px solid #ececec;box-sizing:border-box"></div>
<div class="r" style="left:254.60px;top:372.60px;width:112.70px;height:16.10px;background:#f3fbee"></div>
<div class="r" style="left:367.20px;top:372.60px;width:112.80px;height:17.10px;background:#b7f074"></div>
<div class="r" style="left:367.20px;top:388.80px;width:112.80px;height:1.00px;background:#c7ec98"></div>
<div class="t" style="left:5.40px;top:375.63px;font-size:8px;line-height:10.0px;color:#363636;font-weight:normal;font-style:normal;transform:scaleX(0.9);transform-origin:0 0;">11</div>
<div class="t" style="left:34.20px;top:376.23px;font-size:8px;line-height:10.0px;color:#363636;font-weight:normal;font-style:normal;transform:scaleX(0.826);transform-origin:0 0;">UK-LHR-CW04-02</div>
<div class="t" style="left:145.80px;top:376.23px;font-size:8px;line-height:10.0px;color:#363636;font-weight:normal;font-style:normal;transform:scaleX(0.84);transform-origin:0 0;">Cisco IOS Switch</div>
<div class="r" style="left:258.10px;top:374.00px;width:92.70px;height:13.70px;background:#eefbdb;border:1px solid #dcf0c6;border-radius:1.5px;box-sizing:border-box"></div>
<div class="r" style="left:335.00px;top:374.50px;width:0.90px;height:12.70px;background:#d6ebc2"></div>
<div class="t" style="left:264.70px;top:376.23px;font-size:8px;line-height:10.0px;color:#6d92b4;font-weight:normal;font-style:normal;transform:scaleX(0.88);transform-origin:0 0;">Interface Err_disabl...</div>
<svg class="r" style="left:341px;top:378.80px" width="4" height="6" viewBox="0 0 4 6"><path d="M2.6 0.3V5.6M0.9 1.5L2.6 0.3" fill="none" stroke="#6d9dbf" stroke-width="0.95"/></svg>
<div class="t" style="left:371.00px;top:376.23px;font-size:8px;line-height:10.0px;color:#343a2c;font-weight:normal;font-style:normal;transform:scaleX(0.826);transform-origin:0 0;">UK-LHR-CW04-02...</div>
<div class="t" style="left:484.00px;top:376.23px;font-size:8px;line-height:10.0px;color:#363636;font-weight:normal;font-style:normal;transform:scaleX(0.84);transform-origin:0 0;">UK-LHR</div>
<div class="r" style="left:30.00px;top:201.60px;width:1.00px;height:188.10px;background:#e6e6e6"></div>
<div class="r" style="left:593.00px;top:201.50px;width:10.50px;height:313.50px;background:#f0f0f0;border-left:1px solid #e9e9e9;box-sizing:border-box"></div>
<svg class="r" style="left:594.8px;top:204.9px" width="6" height="4" viewBox="0 0 6 4"><path d="M0 3.5L3 0.5 6 3.5z" fill="#a0a0a0"/></svg>
<svg class="r" style="left:594.5px;top:505px" width="6" height="4" viewBox="0 0 6 4"><path d="M0 0.5L3 3.5 6 0.5z" fill="#909090"/></svg>
<div class="r" style="left:3.00px;top:511.80px;width:889.00px;height:1.00px;background:#ececec"></div>
<div class="r" style="left:3.00px;top:512.80px;width:889.00px;height:0.90px;background:#f6f6f6"></div>
<div class="r" style="left:0.00px;top:513.70px;width:892.00px;height:1.30px;background:linear-gradient(90deg,#c8c8c8,#8e8e8e 15%)"></div>
<div class="r" style="left:161.70px;top:27.30px;width:96.10px;height:75.40px;background:#f7f7f7;border:1px solid #e2e2e2;box-sizing:border-box;box-shadow:0.5px 1.5px 3px rgba(0,0,0,.16)"></div>
<div class="r" style="left:162.50px;top:44.00px;width:94.50px;height:13.60px;background:#cfe1eb"></div>
<div class="t" style="left:169.10px;top:32.23px;font-size:8px;line-height:10.0px;color:#363636;font-weight:normal;font-style:normal;transform:scaleX(0.9);transform-origin:0 0;">Original Table (Default)</div>
<div class="t" style="left:169.10px;top:46.13px;font-size:8px;line-height:10.0px;color:#363636;font-weight:normal;font-style:normal;transform:scaleX(0.8);transform-origin:0 0;">EMEA</div>
<div class="t" style="left:169.10px;top:59.83px;font-size:8px;line-height:10.0px;color:#363636;font-weight:normal;font-style:normal;transform:scaleX(0.78);transform-origin:0 0;">APAC</div>
<div class="t" style="left:169.10px;top:73.83px;font-size:8px;line-height:10.0px;color:#363636;font-weight:normal;font-style:normal;transform:scaleX(0.86);transform-origin:0 0;">NA</div>
<div class="r" style="left:162.50px;top:85.30px;width:94.50px;height:0.80px;background:#e2e2e2"></div>
<div class="t" style="left:169.10px;top:87.83px;font-size:8px;line-height:10.0px;color:#5b8cc4;font-weight:normal;font-style:normal;transform:scaleX(0.875);transform-origin:0 0;">New View</div>
<div class="r" style="left:603.30px;top:33.50px;width:285.30px;height:456.50px;background:#fff;border-left:1px solid #d6d6d6;border-right:1px solid #d9d9d9;box-sizing:border-box"></div>
<div class="r" style="left:889.00px;top:3.00px;width:3.00px;height:512.00px;background:#fff"></div>
<div class="r" style="left:890.80px;top:0.00px;width:1.20px;height:515.00px;background:linear-gradient(90deg,#d0d0d0,#9c9c9c)"></div>
<div class="r" style="left:603.30px;top:33.50px;width:285.30px;height:13.10px;background:#ededed;border-left:1px solid #d6d6d6;box-sizing:border-box"></div>
<div class="t" style="left:606.20px;top:34.75px;font-size:8.8px;line-height:11.0px;color:#3a3a3a;font-weight:bold;font-style:normal;transform:scaleX(0.77);transform-origin:0 0;-webkit-text-stroke:0;">View Settings:</div>
<svg class="r" style="left:878.6px;top:36.7px" width="6.8" height="6.8" viewBox="0 0 7 7"><path d="M0.6 0.6l5.8 5.8M6.4 0.6l-5.8 5.8" stroke="#4f5b64" stroke-width="1.25"/></svg>
<div class="t" style="right:237.20px;top:57.03px;font-size:8px;line-height:10.0px;color:#363636;font-weight:normal;font-style:normal;transform:scaleX(0.9);transform-origin:100% 0;">Name:</div>
<div class="r" style="left:657.50px;top:53.30px;width:222.10px;height:16.10px;background:#fff;border:1px solid #e2e2e2;box-sizing:border-box;border-radius:1px"></div>
<div class="t" style="left:661.50px;top:57.03px;font-size:8px;line-height:10.0px;color:#333;font-weight:normal;font-style:normal;transform:scaleX(0.9);transform-origin:0 0;">EMEA</div>
<div class="t" style="right:237.20px;top:79.73px;font-size:8px;line-height:10.0px;color:#363636;font-weight:normal;font-style:normal;transform:scaleX(0.88);transform-origin:100% 0;">Description:</div>
<div class="r" style="left:657.50px;top:76.00px;width:222.10px;height:16.50px;background:#fff;border:1px solid #e2e2e2;box-sizing:border-box;border-radius:1px"></div>
<div class="t" style="left:661.50px;top:79.73px;font-size:8px;line-height:10.0px;color:#333;font-weight:normal;font-style:normal;transform:scaleX(0.887);transform-origin:0 0;">This is for checking interface error disable for EMEA.</div>
<div class="r" style="left:603.80px;top:115.30px;width:284.20px;height:1.00px;background:#dedede"></div>
<div class="r" style="left:612.30px;top:98.40px;width:42.90px;height:17.90px;background:#fff;border:1px solid #e0e0e0;border-bottom:none;border-radius:2px 2px 0 0;box-sizing:border-box"></div>
<div class="r" style="left:655.20px;top:99.50px;width:41.40px;height:15.80px;background:#f5f7f7;border:1px solid #e2e2e2;border-bottom:none;border-left:none;border-radius:0 2px 0 0;box-sizing:border-box"></div>
<div class="t" style="left:624.20px;top:102.44px;font-size:8.5px;line-height:10.625px;color:#333;font-weight:normal;font-style:normal;transform:scaleX(0.98);transform-origin:0 0;">Table</div>
<div class="t" style="left:666.80px;top:102.94px;font-size:8.5px;line-height:10.625px;color:#666;font-weight:normal;font-style:normal;transform:scaleX(0.87);transform-origin:0 0;">Chart</div>
<div class="t" style="left:612.40px;top:125.13px;font-size:8px;line-height:10.0px;color:#363636;font-weight:normal;font-style:normal;transform:scaleX(0.885);transform-origin:0 0;">5/5 Items Selected</div>
<div class="r" style="left:778.30px;top:121.50px;width:101.40px;height:16.20px;background:#fff;border:1px solid #dcdcdc;box-sizing:border-box"></div>
<div class="t" style="left:782.50px;top:124.83px;font-size:8px;line-height:10.0px;color:#aaa;font-weight:normal;font-style:italic;transform:scaleX(0.8);transform-origin:0 0;">Search...</div>
<svg class="r" style="left:866.5px;top:124.5px" width="10" height="10" viewBox="0 0 10 10"><circle cx="4" cy="4" r="3" fill="none" stroke="#3c86d6" stroke-width="1.2"/><path d="M6.2 6.2L9 9" stroke="#3c86d6" stroke-width="1.4"/></svg>
<div class="r" style="left:612.10px;top:142.20px;width:267.60px;height:168.60px;background:#fff;border:1px solid #dedede;box-sizing:border-box"></div>
<div class="r" style="left:612.10px;top:142.20px;width:267.60px;height:17.40px;background:#f2f2f2;border:1px solid #dcdcdc;box-sizing:border-box"></div>
<div class="r" style="left:632.80px;top:143.20px;width:1.00px;height:15.40px;background:#e2e2e2"></div>
<div class="r" style="left:665.00px;top:143.20px;width:1.00px;height:15.40px;background:#e2e2e2"></div>
<div class="r" style="left:751.10px;top:143.20px;width:1.00px;height:15.40px;background:#e2e2e2"></div>
<div class="r" style="left:799.10px;top:143.20px;width:1.00px;height:15.40px;background:#e2e2e2"></div>
<div class="r" style="left:866.50px;top:143.20px;width:1.00px;height:15.40px;background:#e2e2e2"></div>
<svg class="r" style="left:617.9px;top:147.5px" width="7.2" height="7.2" viewBox="0 0 8 8"><rect x="0" y="0" width="8" height="8" rx="1.4" fill="#1a76ea"/><path d="M1.7 4.2L3.3 5.9 6.4 2.3" fill="none" stroke="#fff" stroke-width="1.35"/></svg>
<div class="t" style="left:637.80px;top:145.75px;font-size:8.7px;line-height:10.875px;color:#363636;font-weight:normal;font-style:normal;transform:scaleX(0.81);transform-origin:0 0;">No.</div>
<div class="t" style="left:669.00px;top:145.75px;font-size:8.7px;line-height:10.875px;color:#363636;font-weight:normal;font-style:normal;transform:scaleX(0.835);transform-origin:0 0;">Column</div>
<div class="t" style="left:755.00px;top:145.75px;font-size:8.7px;line-height:10.875px;color:#363636;font-weight:normal;font-style:normal;transform:scaleX(0.81);transform-origin:0 0;">Tag</div>
<div class="t" style="left:802.70px;top:145.75px;font-size:8.7px;line-height:10.875px;color:#363636;font-weight:normal;font-style:normal;transform:scaleX(0.832);transform-origin:0 0;">Column Group</div>
<div class="r" style="left:613.10px;top:160.10px;width:265.60px;height:17.20px;border-bottom:1px solid #efefef;box-sizing:border-box"></div>
<svg class="r" style="left:618px;top:165.5px" width="7.2" height="7.2" viewBox="0 0 8 8"><rect x="0" y="0" width="8" height="8" rx="1.4" fill="#1a76ea"/><path d="M1.7 4.2L3.3 5.9 6.4 2.3" fill="none" stroke="#fff" stroke-width="1.35"/></svg>
<div class="t" style="left:637.80px;top:164.63px;font-size:8px;line-height:10.0px;color:#363636;font-weight:normal;font-style:normal;transform:scaleX(0.9);transform-origin:0 0;">1</div>
<svg class="r" style="left:665.8px;top:164.79999999999998px" width="7" height="7.2" viewBox="0 0 7 7.2"><path d="M0 1.6C0 0.7 1.6 0 3.5 0S7 0.7 7 1.6V5.6C7 6.5 5.4 7.2 3.5 7.2S0 6.5 0 5.6Z" fill="#1e82ea"/><path d="M0.3 2.2C0.8 2.9 2 3.2 3.5 3.2S6.2 2.9 6.7 2.2" fill="none" stroke="#8fc3f5" stroke-width="0.6"/></svg>
<div class="t" style="left:677.90px;top:164.63px;font-size:8px;line-height:10.0px;color:#363636;font-weight:normal;font-style:normal;transform:scaleX(0.86);transform-origin:0 0;">Device</div>
<div class="t" style="left:802.70px;top:164.63px;font-size:8px;line-height:10.0px;color:#363636;font-weight:normal;font-style:normal;transform:scaleX(0.875);transform-origin:0 0;">Base</div>
<div class="r" style="left:613.10px;top:177.30px;width:265.60px;height:17.20px;background:#f9f9f9;border-bottom:1px solid #efefef;box-sizing:border-box"></div>
<svg class="r" style="left:618px;top:182.7px" width="7.2" height="7.2" viewBox="0 0 8 8"><rect x="0" y="0" width="8" height="8" rx="1.4" fill="#1a76ea"/><path d="M1.7 4.2L3.3 5.9 6.4 2.3" fill="none" stroke="#fff" stroke-width="1.35"/></svg>
<div class="t" style="left:637.80px;top:181.83px;font-size:8px;line-height:10.0px;color:#363636;font-weight:normal;font-style:normal;transform:scaleX(0.9);transform-origin:0 0;">2</div>
<svg class="r" style="left:665.6px;top:181.7px" width="7.4" height="7.4" viewBox="0 0 8 8"><rect x="0.5" y="0.5" width="7" height="7" fill="#fff" stroke="#a9c6dd" stroke-width="0.9"/><path d="M5.2 2.6Q4.8 2.1 4 2.1Q2.9 2.1 2.9 3Q2.9 3.7 4 3.95Q5.2 4.2 5.2 5Q5.2 5.9 4 5.9Q3.1 5.9 2.7 5.3" fill="none" stroke="#4a8fd2" stroke-width="0.85"/></svg>
<div class="t" style="left:677.90px;top:181.83px;font-size:8px;line-height:10.0px;color:#363636;font-weight:normal;font-style:normal;transform:scaleX(0.86);transform-origin:0 0;">Device Type</div>
<div class="t" style="left:802.70px;top:181.83px;font-size:8px;line-height:10.0px;color:#363636;font-weight:normal;font-style:normal;transform:scaleX(0.875);transform-origin:0 0;">Base</div>
<div class="r" style="left:613.10px;top:194.50px;width:265.60px;height:17.20px;border-bottom:1px solid #efefef;box-sizing:border-box"></div>
<svg class="r" style="left:618px;top:199.9px" width="7.2" height="7.2" viewBox="0 0 8 8"><rect x="0" y="0" width="8" height="8" rx="1.4" fill="#1a76ea"/><path d="M1.7 4.2L3.3 5.9 6.4 2.3" fill="none" stroke="#fff" stroke-width="1.35"/></svg>
<div class="t" style="left:637.80px;top:199.03px;font-size:8px;line-height:10.0px;color:#363636;font-weight:normal;font-style:normal;transform:scaleX(0.9);transform-origin:0 0;">3</div>
<svg class="r" style="left:665.6px;top:198.9px" width="7.4" height="7.4" viewBox="0 0 8 8"><rect x="0" y="0" width="8" height="8" fill="#67bff5"/><path d="M4 1.8v4.6" stroke="#fff" stroke-width="1.1"/></svg>
<div class="t" style="left:677.90px;top:199.03px;font-size:8px;line-height:10.0px;color:#363636;font-weight:normal;font-style:normal;transform:scaleX(0.86);transform-origin:0 0;">Interface Error Disa...</div>
<div class="t" style="left:802.70px;top:199.03px;font-size:8px;line-height:10.0px;color:#363636;font-weight:normal;font-style:normal;transform:scaleX(0.875);transform-origin:0 0;">Interface Disable_...</div>
<div class="r" style="left:613.10px;top:211.70px;width:265.60px;height:17.20px;background:#f9f9f9;border-bottom:1px solid #efefef;box-sizing:border-box"></div>
<svg class="r" style="left:618px;top:217.1px" width="7.2" height="7.2" viewBox="0 0 8 8"><rect x="0" y="0" width="8" height="8" rx="1.4" fill="#1a76ea"/><path d="M1.7 4.2L3.3 5.9 6.4 2.3" fill="none" stroke="#fff" stroke-width="1.35"/></svg>
<div class="t" style="left:637.80px;top:216.23px;font-size:8px;line-height:10.0px;color:#363636;font-weight:normal;font-style:normal;transform:scaleX(0.9);transform-origin:0 0;">4</div>
<svg class="r" style="left:665.6px;top:216.1px" width="7.4" height="7.4" viewBox="0 0 8 8"><rect x="0.5" y="0.5" width="7" height="7" fill="#fff" stroke="#a9c6dd" stroke-width="0.9"/><path d="M5.2 2.6Q4.8 2.1 4 2.1Q2.9 2.1 2.9 3Q2.9 3.7 4 3.95Q5.2 4.2 5.2 5Q5.2 5.9 4 5.9Q3.1 5.9 2.7 5.3" fill="none" stroke="#4a8fd2" stroke-width="0.85"/></svg>
<div class="t" style="left:677.90px;top:216.23px;font-size:8px;line-height:10.0px;color:#363636;font-weight:normal;font-style:normal;transform:scaleX(0.86);transform-origin:0 0;">Device Status Code</div>
<div class="t" style="left:802.70px;top:216.23px;font-size:8px;line-height:10.0px;color:#363636;font-weight:normal;font-style:normal;transform:scaleX(0.875);transform-origin:0 0;">Interface Disable_...</div>
<div class="r" style="left:613.10px;top:228.90px;width:265.60px;height:17.20px;border-bottom:1px solid #efefef;box-sizing:border-box"></div>
<svg class="r" style="left:618px;top:234.29999999999998px" width="7.2" height="7.2" viewBox="0 0 8 8"><rect x="0" y="0" width="8" height="8" rx="1.4" fill="#1a76ea"/><path d="M1.7 4.2L3.3 5.9 6.4 2.3" fill="none" stroke="#fff" stroke-width="1.35"/></svg>
<div class="t" style="left:637.80px;top:233.43px;font-size:8px;line-height:10.0px;color:#363636;font-weight:normal;font-style:normal;transform:scaleX(0.9);transform-origin:0 0;">5</div>
<svg class="r" style="left:665.6px;top:233.29999999999998px" width="7.4" height="7.4" viewBox="0 0 8 8"><rect x="0.5" y="0.5" width="7" height="7" fill="#fff" stroke="#a9c6dd" stroke-width="0.9"/><path d="M5.2 2.6Q4.8 2.1 4 2.1Q2.9 2.1 2.9 3Q2.9 3.7 4 3.95Q5.2 4.2 5.2 5Q5.2 5.9 4 5.9Q3.1 5.9 2.7 5.3" fill="none" stroke="#4a8fd2" stroke-width="0.85"/></svg>
<div class="t" style="left:677.90px;top:233.43px;font-size:8px;line-height:10.0px;color:#363636;font-weight:normal;font-style:normal;transform:scaleX(0.86);transform-origin:0 0;">Site</div>
<div class="t" style="left:802.70px;top:233.43px;font-size:8px;line-height:10.0px;color:#363636;font-weight:normal;font-style:normal;transform:scaleX(0.875);transform-origin:0 0;">Base</div>
<svg class="r" style="left:612.1px;top:326px" width="7" height="7" viewBox="0 0 8 8"><rect x="0" y="0" width="8" height="8" rx="1.4" fill="#1a76ea"/><path d="M1.7 4.2L3.3 5.9 6.4 2.3" fill="none" stroke="#fff" stroke-width="1.35"/></svg>
<div class="t" style="left:623.00px;top:325.43px;font-size:8px;line-height:10.0px;color:#363636;font-weight:normal;font-style:normal;transform:scaleX(0.86);transform-origin:0 0;">Filter Row</div>
<div class="r" style="left:656.40px;top:321.20px;width:223.10px;height:17.30px;background:#fff;border:1px solid #dedede;box-sizing:border-box;border-radius:1px"></div>
<div class="t" style="left:661.00px;top:325.13px;font-size:8px;line-height:10.0px;color:#363636;font-weight:normal;font-style:normal;transform:scaleX(0.885);transform-origin:0 0;">By Advanced Filter</div>
<svg class="r" style="left:869px;top:327.5px" width="8" height="5" viewBox="0 0 8 5"><path d="M1 1l3 3 3-3" fill="none" stroke="#444" stroke-width="1"/></svg>
<div class="t" style="left:657.50px;top:347.83px;font-size:8px;line-height:10.0px;color:#333;font-weight:bold;font-style:normal;transform:scaleX(0.805);transform-origin:0 0;-webkit-text-stroke:0;">IF<span style="margin-left:1.3px"> </span>A or B or C</div>
<svg class="r" style="left:705px;top:348.5px" width="8" height="8" viewBox="0 0 8 8"><path d="M1.2 6.6L6.4 1.4" stroke="#3c86d6" stroke-width="1.5" stroke-linecap="round"/><path d="M3.8 7.3h3.6" stroke="#f5b840" stroke-width="1.1"/></svg>
<div class="r" style="left:657.00px;top:362.90px;width:18.00px;height:16.90px;background:#fff;border:1px solid #e0e0e0;box-sizing:border-box;border-radius:1px"></div>
<div class="t" style="left:616.00px;width:100px;text-align:center;top:368.23px;font-size:8px;line-height:10.0px;color:#555;font-weight:normal;font-style:normal;transform:scaleX(0.9);transform-origin:50% 0;">A</div>
<div class="r" style="left:674.50px;top:362.90px;width:58.20px;height:16.90px;background:#fff;border:1px solid #e0e0e0;box-sizing:border-box;border-radius:1px"></div>
<div class="t" style="left:679.30px;top:366.33px;font-size:8px;line-height:10.0px;color:#363636;font-weight:normal;font-style:normal;transform:scaleX(0.86);transform-origin:0 0;">Device</div>
<svg class="r" style="left:721.5px;top:369.20px" width="8" height="5" viewBox="0 0 8 5"><path d="M1 1l3 3 3-3" fill="none" stroke="#444" stroke-width="1"/></svg>
<div class="r" style="left:736.00px;top:362.90px;width:58.00px;height:16.90px;background:#fff;border:1px solid #e0e0e0;box-sizing:border-box;border-radius:1px"></div>
<div class="t" style="left:740.80px;top:366.33px;font-size:8px;line-height:10.0px;color:#363636;font-weight:normal;font-style:normal;transform:scaleX(0.86);transform-origin:0 0;">Contains</div>
<svg class="r" style="left:782.5px;top:369.20px" width="8" height="5" viewBox="0 0 8 5"><path d="M1 1l3 3 3-3" fill="none" stroke="#444" stroke-width="1"/></svg>
<div class="r" style="left:797.80px;top:362.90px;width:57.80px;height:16.90px;background:#fff;border:1px solid #e0e0e0;box-sizing:border-box;border-radius:1px"></div>
<div class="t" style="left:801.80px;top:367.23px;font-size:8px;line-height:10.0px;color:#363636;font-weight:normal;font-style:normal;transform:scaleX(0.86);transform-origin:0 0;">UK-</div>
<svg class="r" style="left:859.80px;top:368.10px" width="7.2" height="7.2" viewBox="0 0 7 7"><circle cx="3.5" cy="3.5" r="3.5" fill="#2f80e6"/><path d="M3.5 1.6v3.8M1.6 3.5h3.8" stroke="#fff" stroke-width="1"/></svg>
<svg class="r" style="left:871.10px;top:368.70px" width="6" height="6" viewBox="0 0 6 6"><path d="M0.4 0.4l5.2 5.2M5.6 0.4l-5.2 5.2" stroke="#6a6a6a" stroke-width="0.9"/></svg>
<div class="r" style="left:657.00px;top:386.30px;width:18.00px;height:16.90px;background:#fff;border:1px solid #e0e0e0;box-sizing:border-box;border-radius:1px"></div>
<div class="t" style="left:616.00px;width:100px;text-align:center;top:391.63px;font-size:8px;line-height:10.0px;color:#555;font-weight:normal;font-style:normal;transform:scaleX(0.9);transform-origin:50% 0;">B</div>
<div class="r" style="left:674.50px;top:386.30px;width:58.20px;height:16.90px;background:#fff;border:1px solid #e0e0e0;box-sizing:border-box;border-radius:1px"></div>
<div class="t" style="left:679.30px;top:389.73px;font-size:8px;line-height:10.0px;color:#363636;font-weight:normal;font-style:normal;transform:scaleX(0.86);transform-origin:0 0;">Device</div>
<svg class="r" style="left:721.5px;top:392.60px" width="8" height="5" viewBox="0 0 8 5"><path d="M1 1l3 3 3-3" fill="none" stroke="#444" stroke-width="1"/></svg>
<div class="r" style="left:736.00px;top:386.30px;width:58.00px;height:16.90px;background:#fff;border:1px solid #e0e0e0;box-sizing:border-box;border-radius:1px"></div>
<div class="t" style="left:740.80px;top:389.73px;font-size:8px;line-height:10.0px;color:#363636;font-weight:normal;font-style:normal;transform:scaleX(0.86);transform-origin:0 0;">Contains</div>
<svg class="r" style="left:782.5px;top:392.60px" width="8" height="5" viewBox="0 0 8 5"><path d="M1 1l3 3 3-3" fill="none" stroke="#444" stroke-width="1"/></svg>
<div class="r" style="left:797.80px;top:386.30px;width:57.80px;height:16.90px;background:#fff;border:1px solid #e0e0e0;box-sizing:border-box;border-radius:1px"></div>
<div class="t" style="left:801.80px;top:390.63px;font-size:8px;line-height:10.0px;color:#363636;font-weight:normal;font-style:normal;transform:scaleX(0.86);transform-origin:0 0;">DE-</div>
<svg class="r" style="left:859.80px;top:391.50px" width="7.2" height="7.2" viewBox="0 0 7 7"><circle cx="3.5" cy="3.5" r="3.5" fill="#2f80e6"/><path d="M3.5 1.6v3.8M1.6 3.5h3.8" stroke="#fff" stroke-width="1"/></svg>
<svg class="r" style="left:871.10px;top:392.10px" width="6" height="6" viewBox="0 0 6 6"><path d="M0.4 0.4l5.2 5.2M5.6 0.4l-5.2 5.2" stroke="#6a6a6a" stroke-width="0.9"/></svg>
<div class="r" style="left:657.00px;top:409.70px;width:18.00px;height:16.90px;background:#fff;border:1px solid #e0e0e0;box-sizing:border-box;border-radius:1px"></div>
<div class="t" style="left:616.00px;width:100px;text-align:center;top:415.03px;font-size:8px;line-height:10.0px;color:#555;font-weight:normal;font-style:normal;transform:scaleX(0.9);transform-origin:50% 0;">C</div>
<div class="r" style="left:674.50px;top:409.70px;width:58.20px;height:16.90px;background:#fff;border:1px solid #e0e0e0;box-sizing:border-box;border-radius:1px"></div>
<div class="t" style="left:679.30px;top:413.13px;font-size:8px;line-height:10.0px;color:#363636;font-weight:normal;font-style:normal;transform:scaleX(0.86);transform-origin:0 0;">Device</div>
<svg class="r" style="left:721.5px;top:416.00px" width="8" height="5" viewBox="0 0 8 5"><path d="M1 1l3 3 3-3" fill="none" stroke="#444" stroke-width="1"/></svg>
<div class="r" style="left:736.00px;top:409.70px;width:58.00px;height:16.90px;background:#fff;border:1px solid #e0e0e0;box-sizing:border-box;border-radius:1px"></div>
<div class="t" style="left:740.80px;top:413.13px;font-size:8px;line-height:10.0px;color:#363636;font-weight:normal;font-style:normal;transform:scaleX(0.86);transform-origin:0 0;">Contains</div>
<svg class="r" style="left:782.5px;top:416.00px" width="8" height="5" viewBox="0 0 8 5"><path d="M1 1l3 3 3-3" fill="none" stroke="#444" stroke-width="1"/></svg>
<div class="r" style="left:797.80px;top:409.70px;width:57.80px;height:16.90px;background:#fff;border:1px solid #e0e0e0;box-sizing:border-box;border-radius:1px"></div>
<div class="t" style="left:801.80px;top:414.03px;font-size:8px;line-height:10.0px;color:#363636;font-weight:normal;font-style:normal;transform:scaleX(0.86);transform-origin:0 0;">FA-</div>
<svg class="r" style="left:859.80px;top:414.90px" width="7.2" height="7.2" viewBox="0 0 7 7"><circle cx="3.5" cy="3.5" r="3.5" fill="#2f80e6"/><path d="M3.5 1.6v3.8M1.6 3.5h3.8" stroke="#fff" stroke-width="1"/></svg>
<svg class="r" style="left:871.10px;top:415.50px" width="6" height="6" viewBox="0 0 6 6"><path d="M0.4 0.4l5.2 5.2M5.6 0.4l-5.2 5.2" stroke="#6a6a6a" stroke-width="0.9"/></svg>
<div class="r" style="left:603.30px;top:490.00px;width:285.30px;height:22.00px;background:#ececec;border-left:1px solid #d6d6d6;box-sizing:border-box"></div>
<div class="t" style="right:61.80px;top:496.93px;font-size:8px;line-height:10.0px;color:#5b8fc8;font-weight:normal;font-style:normal;transform:scaleX(0.83);transform-origin:100% 0;">Cancel</div>
<div class="r" style="left:841.20px;top:493.20px;width:44.00px;height:16.80px;background:#fdc93a;border-radius:2px"></div>
<div class="t" style="left:813.30px;width:100px;text-align:center;top:496.64px;font-size:8.5px;line-height:10.625px;color:#333;font-weight:normal;font-style:normal;transform:scaleX(0.9);transform-origin:50% 0;">Save</div>
<svg class="r" style="left:0;top:0" width="892" height="515" viewBox="0 0 892 515"><defs><filter id="sh" x="-5%" y="-50%" width="110%" height="200%"><feDropShadow dx="0.5" dy="1.5" stdDeviation="1" flood-color="#000" flood-opacity="0.25"/></filter></defs><g filter="url(#sh)"><rect x="159.6" y="87.2" width="87.2" height="12.1" fill="none" stroke="#6ba12f" stroke-width="2.1"/><path d="M247.5 93.4L596 46.4" stroke="#6ba12f" stroke-width="3.4"/><path d="M605.5 45.4L595.3 42L596.9 51.3Z" fill="#6ba12f"/></g></svg>
</body></html>
